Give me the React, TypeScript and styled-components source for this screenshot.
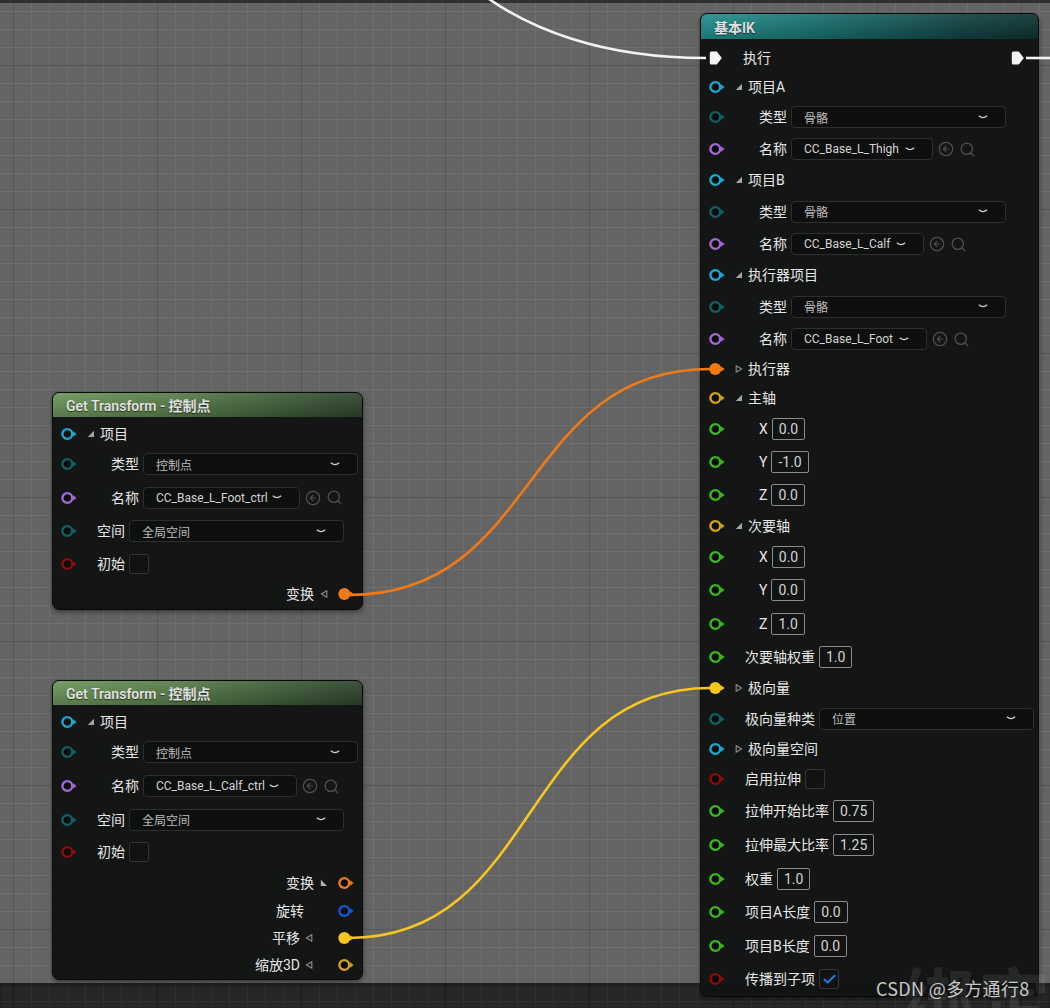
import React from 'react';
import styled, { createGlobalStyle } from 'styled-components';
import { CircleArrowLeft, Search, Check } from 'lucide-react';

const GlobalStyle = createGlobalStyle`
  html, body {
    margin: 0;
    padding: 0;
    background: #636363;
  }
  body {
    font-family: Roboto, "Noto Sans CJK SC", sans-serif;
  }
`;

// pin colours by data type
const PIN: Record<string, string> = {
  struct: '#19a9d3',
  enumT: '#0e6262',
  name: '#a468d6',
  transform: '#f27a16',
  vector: '#d4a319',
  float: '#3ab81c',
  bool: '#8c0c0c',
  rotator: '#0b5bd4',
  vecLive: '#f7c61f',
};

type Widget =
  | { t: 'select'; v: string; w: number }
  | { t: 'name'; v: string; w: number }
  | { t: 'num'; v: string }
  | { t: 'check'; on?: boolean };

type Expand = 'open' | 'closed' | 'left' | 'down';

type RowDef =
  | { kind: 'exec'; label: string; h: number }
  | {
      kind: 'in';
      pin: string;
      live?: boolean;
      label: string;
      lv: 'open' | 'closed' | 'top' | 'sub';
      h: number;
      widget?: Widget;
    }
  | {
      kind: 'out';
      pin: string;
      live?: boolean;
      label: string;
      h: number;
      ind?: Expand;
      lgap: number;
      gap: number;
    };

const ikRows: RowDef[] = [
  { kind: 'exec', label: '执行', h: 28 },
  { kind: 'in', pin: 'struct', label: '项目A', lv: 'open', h: 29 },
  { kind: 'in', pin: 'enumT', label: '类型', lv: 'sub', h: 32, widget: { t: 'select', v: '骨骼', w: 215 } },
  { kind: 'in', pin: 'name', label: '名称', lv: 'sub', h: 32, widget: { t: 'name', v: 'CC_Base_L_Thigh', w: 142 } },
  { kind: 'in', pin: 'struct', label: '项目B', lv: 'open', h: 30 },
  { kind: 'in', pin: 'enumT', label: '类型', lv: 'sub', h: 33, widget: { t: 'select', v: '骨骼', w: 215 } },
  { kind: 'in', pin: 'name', label: '名称', lv: 'sub', h: 32, widget: { t: 'name', v: 'CC_Base_L_Calf', w: 133 } },
  { kind: 'in', pin: 'struct', label: '执行器项目', lv: 'open', h: 30 },
  { kind: 'in', pin: 'enumT', label: '类型', lv: 'sub', h: 33, widget: { t: 'select', v: '骨骼', w: 215 } },
  { kind: 'in', pin: 'name', label: '名称', lv: 'sub', h: 32, widget: { t: 'name', v: 'CC_Base_L_Foot', w: 136 } },
  { kind: 'in', pin: 'transform', live: true, label: '执行器', lv: 'closed', h: 28 },
  { kind: 'in', pin: 'vector', label: '主轴', lv: 'open', h: 29 },
  { kind: 'in', pin: 'float', label: 'X', lv: 'sub', h: 33, widget: { t: 'num', v: '0.0' } },
  { kind: 'in', pin: 'float', label: 'Y', lv: 'sub', h: 34, widget: { t: 'num', v: '-1.0' } },
  { kind: 'in', pin: 'float', label: 'Z', lv: 'sub', h: 32, widget: { t: 'num', v: '0.0' } },
  { kind: 'in', pin: 'vector', label: '次要轴', lv: 'open', h: 30 },
  { kind: 'in', pin: 'float', label: 'X', lv: 'sub', h: 32, widget: { t: 'num', v: '0.0' } },
  { kind: 'in', pin: 'float', label: 'Y', lv: 'sub', h: 34, widget: { t: 'num', v: '0.0' } },
  { kind: 'in', pin: 'float', label: 'Z', lv: 'sub', h: 34, widget: { t: 'num', v: '1.0' } },
  { kind: 'in', pin: 'float', label: '次要轴权重', lv: 'top', h: 32, widget: { t: 'num', v: '1.0' } },
  { kind: 'in', pin: 'vecLive', live: true, label: '极向量', lv: 'closed', h: 30 },
  { kind: 'in', pin: 'enumT', label: '极向量种类', lv: 'top', h: 31, widget: { t: 'select', v: '位置', w: 215 } },
  { kind: 'in', pin: 'struct', label: '极向量空间', lv: 'closed', h: 30 },
  { kind: 'in', pin: 'bool', label: '启用拉伸', lv: 'top', h: 30, widget: { t: 'check' } },
  { kind: 'in', pin: 'float', label: '拉伸开始比率', lv: 'top', h: 34, widget: { t: 'num', v: '0.75' } },
  { kind: 'in', pin: 'float', label: '拉伸最大比率', lv: 'top', h: 34, widget: { t: 'num', v: '1.25' } },
  { kind: 'in', pin: 'float', label: '权重', lv: 'top', h: 33, widget: { t: 'num', v: '1.0' } },
  { kind: 'in', pin: 'float', label: '项目A长度', lv: 'top', h: 34, widget: { t: 'num', v: '0.0' } },
  { kind: 'in', pin: 'float', label: '项目B长度', lv: 'top', h: 34, widget: { t: 'num', v: '0.0' } },
  { kind: 'in', pin: 'bool', label: '传播到子项', lv: 'top', h: 32, widget: { t: 'check', on: true } },
];

const footRows: RowDef[] = [
  { kind: 'in', pin: 'struct', label: '项目', lv: 'open', h: 26 },
  { kind: 'in', pin: 'enumT', label: '类型', lv: 'sub', h: 34, widget: { t: 'select', v: '控制点', w: 215 } },
  { kind: 'in', pin: 'name', label: '名称', lv: 'sub', h: 33, widget: { t: 'name', v: 'CC_Base_L_Foot_ctrl', w: 157 } },
  { kind: 'in', pin: 'enumT', label: '空间', lv: 'top', h: 34, widget: { t: 'select', v: '全局空间', w: 215 } },
  { kind: 'in', pin: 'bool', label: '初始', lv: 'top', h: 32, widget: { t: 'check' } },
  { kind: 'out', pin: 'transform', live: true, label: '变换', h: 28, ind: 'left', lgap: 6, gap: 10 },
];

const calfRows: RowDef[] = [
  { kind: 'in', pin: 'struct', label: '项目', lv: 'open', h: 26 },
  { kind: 'in', pin: 'enumT', label: '类型', lv: 'sub', h: 34, widget: { t: 'select', v: '控制点', w: 215 } },
  { kind: 'in', pin: 'name', label: '名称', lv: 'sub', h: 34, widget: { t: 'name', v: 'CC_Base_L_Calf_ctrl', w: 154 } },
  { kind: 'in', pin: 'enumT', label: '空间', lv: 'top', h: 33, widget: { t: 'select', v: '全局空间', w: 215 } },
  { kind: 'in', pin: 'bool', label: '初始', lv: 'top', h: 32, widget: { t: 'check' } },
  { kind: 'out', pin: 'transform', label: '变换', h: 30, ind: 'down', lgap: 6, gap: 10 },
  { kind: 'out', pin: 'rotator', label: '旋转', h: 26, lgap: 0, gap: 34 },
  { kind: 'out', pin: 'vecLive', live: true, label: '平移', h: 27, ind: 'left', lgap: 5, gap: 25 },
  { kind: 'out', pin: 'vector', label: '缩放3D', h: 27, ind: 'left', lgap: 5, gap: 25 },
];

/* ---------- canvas ---------- */

const Page = styled.div`
  position: relative;
  width: 1050px;
  height: 1008px;
  overflow: hidden;
  display: flex;
  flex-direction: column;
  background: #636363;
`;

const TopEdge = styled.div`
  height: 3px;
  flex: none;
  background: #303030;
`;

const Graph = styled.div`
  flex: 1;
  background-color: #646464;
  background-image:
    linear-gradient(to right, #565656 1px, transparent 1px),
    linear-gradient(to bottom, #565656 1px, transparent 1px),
    linear-gradient(to right, #6f6f6f 1px, transparent 1px),
    linear-gradient(to bottom, #6f6f6f 1px, transparent 1px);
  background-size: 144px 144px, 144px 144px, 18px 18px, 18px 18px;
  background-position: 13px 0, 0 62px, 13px 0, 0 8px;
`;

const BottomBand = styled.div`
  height: 25px;
  flex: none;
  background-color: #262626;
  background-image:
    linear-gradient(to right, #1c1c1c 1px, transparent 1px),
    linear-gradient(to right, #303030 1px, transparent 1px),
    linear-gradient(to bottom, #303030 1px, transparent 1px);
  background-size: 144px 144px, 18px 18px, 18px 18px;
  background-position: 13px 0, 13px 0, 0 0;
  box-shadow: inset 0 2px 3px rgba(0, 0, 0, 0.35);
`;

const WireLayer = styled.svg`
  position: absolute;
  left: 0;
  top: 0;
  pointer-events: none;
  z-index: 3;
`;

const FaintMark = styled.div`
  position: absolute;
  left: 902px;
  top: 944px;
  z-index: 4;
  font-family: "Noto Sans CJK SC", sans-serif;
  font-size: 72px;
  font-weight: 700;
  letter-spacing: 4px;
  color: rgba(210, 210, 210, 0.1);
  pointer-events: none;
  white-space: nowrap;
`;

const Credit = styled.div`
  position: absolute;
  left: 876px;
  top: 975px;
  z-index: 5;
  font-family: "Noto Sans CJK SC", "Noto Sans", sans-serif;
  font-size: 18px;
  letter-spacing: 0.3px;
  color: rgba(232, 232, 232, 0.85);
  white-space: nowrap;
`;

/* ---------- node ---------- */

const NodeBox = styled.div<{ $x: number; $y: number; $w: number }>`
  position: absolute;
  left: ${(p) => p.$x}px;
  top: ${(p) => p.$y}px;
  width: ${(p) => p.$w}px;
  box-sizing: border-box;
  z-index: 2;
  background: rgba(17, 20, 19, 0.97);
  border: 1px solid #080909;
  border-radius: 7px;
  box-shadow: 0 2px 5px rgba(0, 0, 0, 0.45);
  overflow: hidden;
`;

const Header = styled.div<{ $bg: string; $h: number }>`
  height: ${(p) => p.$h}px;
  display: flex;
  align-items: center;
  padding-left: 13px;
  background:
    linear-gradient(180deg, rgba(255, 255, 255, 0.08), rgba(0, 0, 0, 0.18)),
    ${(p) => p.$bg};
  color: #e0e0e0;
  font-size: 14px;
  font-weight: 600;
  text-shadow: 0 1px 1px rgba(0, 0, 0, 0.6);
  white-space: nowrap;
`;

const Body = styled.div<{ $top: number }>`
  padding: ${(p) => p.$top}px 0 1px;
  display: flex;
  flex-direction: column;
`;

const Row = styled.div<{ $h: number }>`
  display: flex;
  align-items: center;
  height: ${(p) => p.$h}px;
  padding: 0 9px 0 8px;
`;

const OutRow = styled(Row)`
  justify-content: flex-end;
  padding-right: 7px;
`;

const Label = styled.span<{ $indent?: number }>`
  margin-left: ${(p) => p.$indent ?? 0}px;
  font-size: 14px;
  color: #e6e6e6;
  white-space: nowrap;
  line-height: 1;
`;

const PinIcon = styled.svg`
  flex: none;
  display: block;
`;

const ExpandIcon = styled.svg<{ $ml: number; $mr: number }>`
  flex: none;
  display: block;
  margin-left: ${(p) => p.$ml}px;
  margin-right: ${(p) => p.$mr}px;
`;

const ExecOut = styled.div`
  margin-left: auto;
  margin-right: 1px;
  display: flex;
`;

const SelectBox = styled.div<{ $w: number; $bright?: boolean }>`
  margin-left: 4px;
  width: ${(p) => p.$w}px;
  height: 22px;
  box-sizing: border-box;
  flex: none;
  display: flex;
  align-items: center;
  justify-content: space-between;
  padding: 0 17px 0 12px;
  background: #0e0f0f;
  border: 1px solid #2d2f2f;
  border-radius: 4px;
  font-size: 12px;
  color: ${(p) => (p.$bright ? '#d4d4d4' : '#bdbdbd')};
  white-space: nowrap;
`;

const NumBox = styled.div`
  margin-left: 4px;
  height: 22px;
  box-sizing: border-box;
  padding: 0 6px;
  display: flex;
  align-items: center;
  background: #121313;
  border: 1px solid #8a8a8a;
  border-radius: 2px;
  font-size: 14px;
  color: #d4d4d4;
`;

const CheckBox = styled.div`
  margin-left: 4px;
  width: 20px;
  height: 20px;
  box-sizing: border-box;
  display: flex;
  align-items: center;
  justify-content: center;
  background: #111212;
  border: 1px solid #343535;
  border-radius: 3px;
`;

const Tools = styled.div`
  display: flex;
  align-items: center;
  gap: 5px;
  margin-left: 5px;
  color: #4f5150;
`;

function Pin({ color, filled }: { color: string; filled?: boolean }) {
  return (
    <PinIcon width="17" height="14" viewBox="0 0 17 14">
      {filled ? (
        <circle cx="6.3" cy="7" r="6" fill={color} />
      ) : (
        <circle cx="6.3" cy="7" r="4.9" fill="#0a0c0b" stroke={color} strokeWidth="2.4" />
      )}
      <path d="M12.1 4.3 L15.6 7 L12.1 9.7 Z" fill={color} />
    </PinIcon>
  );
}

function ExecPin() {
  return (
    <PinIcon width="17" height="14" viewBox="0 0 17 14">
      <path
        d="M2.3 0.5 H7.8 L12.8 7 L7.8 13.5 H2.3 Q0.8 13.5 0.8 12 V2 Q0.8 0.5 2.3 0.5 Z"
        fill="#f3f3f3"
      />
    </PinIcon>
  );
}

function Expander({ shape, ml, mr }: { shape: Expand; ml: number; mr: number }) {
  return (
    <ExpandIcon $ml={ml} $mr={mr} width="8" height="8" viewBox="0 0 8 8">
      {shape === 'open' && <path d="M7 0.8 V7 H0.8 Z" fill="#a6a6a6" />}
      {shape === 'down' && <path d="M0.8 0.8 V7 H7 Z" fill="#b2b2b2" />}
      {shape === 'closed' && (
        <path d="M1.2 0.8 L6.6 4 L1.2 7.2 Z" fill="none" stroke="#8d8d8d" strokeWidth="1.1" />
      )}
      {shape === 'left' && (
        <path d="M6.8 0.8 L1.4 4 L6.8 7.2 Z" fill="none" stroke="#8d8d8d" strokeWidth="1.1" />
      )}
    </ExpandIcon>
  );
}

function Chevron() {
  return (
    <svg width="10" height="5" viewBox="0 0 10 5" style={{ flex: 'none' }}>
      <path d="M0.8 0.8 Q5 4.6 9.2 0.8" fill="none" stroke="#d0d0d0" strokeWidth="1.2" />
    </svg>
  );
}

function RowWidget({ w }: { w: Widget }) {
  switch (w.t) {
    case 'select':
      return (
        <SelectBox $w={w.w}>
          <span>{w.v}</span>
          <Chevron />
        </SelectBox>
      );
    case 'name':
      return (
        <>
          <SelectBox $w={w.w} $bright>
            <span>{w.v}</span>
            <Chevron />
          </SelectBox>
          <Tools>
            <CircleArrowLeft size={16} strokeWidth={1.8} />
            <Search size={17} strokeWidth={1.8} />
          </Tools>
        </>
      );
    case 'num':
      return <NumBox>{w.v}</NumBox>;
    case 'check':
      return (
        <CheckBox>{w.on && <Check size={15} strokeWidth={3} color="#1d80e6" />}</CheckBox>
      );
  }
}

function NodeRow({ row }: { row: RowDef }) {
  if (row.kind === 'exec') {
    return (
      <Row $h={row.h}>
        <ExecPin />
        <Label $indent={17}>{row.label}</Label>
        <ExecOut>
          <ExecPin />
        </ExecOut>
      </Row>
    );
  }
  if (row.kind === 'out') {
    return (
      <OutRow $h={row.h}>
        <Label>{row.label}</Label>
        {row.ind ? (
          <Expander shape={row.ind} ml={row.lgap} mr={row.gap} />
        ) : (
          <ExpandIcon $ml={0} $mr={row.gap} width="0" height="8" />
        )}
        <Pin color={PIN[row.pin]} filled={row.live} />
      </OutRow>
    );
  }
  const hasArrow = row.lv === 'open' || row.lv === 'closed';
  const indent = row.lv === 'top' ? 19 : row.lv === 'sub' ? 33 : 0;
  return (
    <Row $h={row.h}>
      <Pin color={PIN[row.pin]} filled={row.live} />
      {hasArrow && <Expander shape={row.lv as Expand} ml={9} mr={5} />}
      <Label $indent={indent}>{row.label}</Label>
      {row.widget && <RowWidget w={row.widget} />}
    </Row>
  );
}

const TONES: Record<string, string> = {
  teal: 'linear-gradient(90deg, #22908f 0%, #18706f 35%, #10403f 80%, #0d3233 100%)',
  green: 'linear-gradient(90deg, #6c9659 0%, #587d49 40%, #3a5636 80%, #2e432c 100%)',
};

function GraphNode(props: {
  x: number;
  y: number;
  w: number;
  title: string;
  tone: 'teal' | 'green';
  headerH: number;
  top: number;
  rows: RowDef[];
}) {
  return (
    <NodeBox $x={props.x} $y={props.y} $w={props.w}>
      <Header $bg={TONES[props.tone]} $h={props.headerH}>
        {props.title}
      </Header>
      <Body $top={props.top}>
        {props.rows.map((r, i) => (
          <NodeRow key={i} row={r} />
        ))}
      </Body>
    </NodeBox>
  );
}

function Wires() {
  return (
    <WireLayer width="1050" height="1008" viewBox="0 0 1050 1008">
      <path
        d="M482 -6 C528 28, 600 58, 706 58"
        fill="none"
        stroke="#f2f2f2"
        strokeWidth="2.6"
      />
      <path d="M1026 58 L1056 58" stroke="#f2f2f2" strokeWidth="2.6" />
      <path
        d="M349 595 C540 595, 520 369, 710 369"
        fill="none"
        stroke="#f27a16"
        strokeWidth="2.6"
      />
      <path
        d="M349 938 C540 938, 520 688, 710 688"
        fill="none"
        stroke="#f7c61f"
        strokeWidth="2.6"
      />
    </WireLayer>
  );
}

export default function App() {
  return (
    <>
      <GlobalStyle />
      <Page>
        <TopEdge />
        <Graph />
        <BottomBand />
        <GraphNode x={700} y={13} w={339} title="基本IK" tone="teal" headerH={25} top={5} rows={ikRows} />
        <GraphNode
          x={52}
          y={392}
          w={311}
          title="Get Transform - 控制点"
          tone="green"
          headerH={24}
          top={4}
          rows={footRows}
        />
        <GraphNode
          x={52}
          y={680}
          w={311}
          title="Get Transform - 控制点"
          tone="green"
          headerH={24}
          top={4}
          rows={calfRows}
        />
        <Wires />
        <FaintMark>绑定</FaintMark>
        <Credit>CSDN @多方通行8</Credit>
      </Page>
    </>
  );
}
